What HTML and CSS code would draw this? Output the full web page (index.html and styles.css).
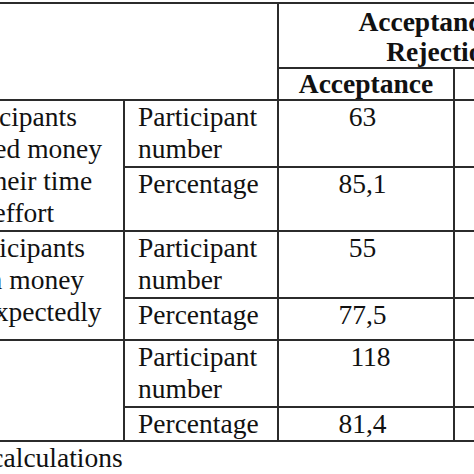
FILE: index.html
```html
<!DOCTYPE html>
<html lang="en">
<head>
  <meta charset="UTF-8" />
  <title>Acceptance or Rejection</title>
  <link rel="stylesheet" href="styles.css">
</head>
<body>
  <div class="sheet">
    <table class="results">
      <colgroup>
        <col class="col-group">
        <col class="col-measure">
        <col class="col-value">
        <col class="col-value">
      </colgroup>
      <tr class="head-top">
        <th colspan="2" rowspan="2"></th>
        <th colspan="2" class="head-main">Acceptance or<br>Rejection</th>
      </tr>
      <tr class="head-sub">
        <th>Acceptance</th>
        <th>Rejection</th>
      </tr>
      <tr class="row-a">
        <td rowspan="2" class="group">Participants earned money for their time and effort</td>
        <td class="measure">Participant number</td>
        <td class="num">63</td>
        <td class="num">11</td>
      </tr>
      <tr class="row-b">
        <td class="measure">Percentage</td>
        <td class="num">85,1</td>
        <td class="num">14,9</td>
      </tr>
      <tr class="row-a">
        <td rowspan="2" class="group group-indent">Participants won money unexpectedly</td>
        <td class="measure">Participant number</td>
        <td class="num">55</td>
        <td class="num">16</td>
      </tr>
      <tr class="row-b row-mid">
        <td class="measure">Percentage</td>
        <td class="num">77,5</td>
        <td class="num">22,5</td>
      </tr>
      <tr class="row-a">
        <td rowspan="2" class="group"></td>
        <td class="measure">Participant number</td>
        <td class="num num-wide">118</td>
        <td class="num">27</td>
      </tr>
      <tr class="row-b row-last">
        <td class="measure">Percentage</td>
        <td class="num">81,4</td>
        <td class="num">18,6</td>
      </tr>
    </table>
    <p class="source">Own calculations</p>
  </div>
</body>
</html>
```

FILE: styles.css
```css
body {
  margin: 0;
  background: #fff;
  color: #111;
  font-family: "Liberation Serif", "Times New Roman", "DejaVu Serif", serif;
  font-size: 27.5px;
  overflow: hidden;
}

.sheet {
  width: 700px;
  margin-left: -70px;
  padding-top: 2px;
}

.results {
  border-collapse: collapse;
  table-layout: fixed;
  width: 675px;
}

.col-group { width: 193px; }
.col-measure { width: 154px; }
.col-value { width: 176px; }
.col-value + .col-value { width: 152px; }

.results td {
  border: 2px solid #2b2b2b;
  vertical-align: top;
  line-height: 32px;
  padding: 0;
}

.results th {
  border: 2px solid #2b2b2b;
  vertical-align: top;
  text-align: center;
  line-height: 30px;
  padding: 0;
}

.head-top { height: 65px; }
.head-sub { height: 32px; }

.results .head-main {
  padding-top: 3px;
}

.row-a { height: 67px; }
.row-b { height: 64px; }
.row-mid { height: 42px; }
.row-last { height: 33px; }

.results .group {
  padding: 0 14px 0 15px;
  text-align: left;
}

.results .group-indent {
  padding-left: 23px;
}

.results .measure {
  padding-left: 13px;
}

.results .num {
  text-align: center;
  padding-right: 7px;
}

.results .num-wide {
  padding-left: 16px;
}

.source {
  margin: 0;
  padding-left: 1px;
  line-height: 32px;
}
```
